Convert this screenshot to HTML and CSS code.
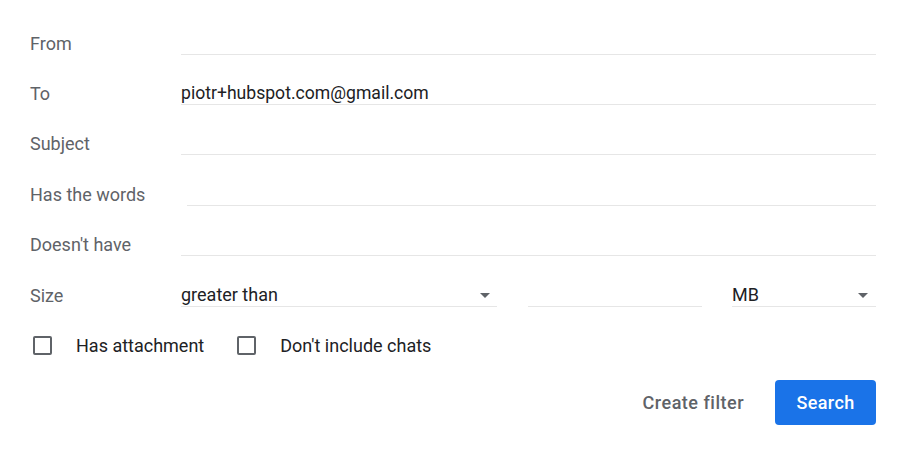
FILE: index.html
```html
<!DOCTYPE html>
<html>
<head>
<meta charset="utf-8">
<link rel="stylesheet" href="styles.css">
</head>
<body>
<form class="search-form">
  <div class="row">
    <label class="label">From</label>
    <div class="field"></div>
  </div>
  <div class="row">
    <label class="label">To</label>
    <div class="field">piotr+hubspot.com@gmail.com</div>
  </div>
  <div class="row">
    <label class="label">Subject</label>
    <div class="field"></div>
  </div>
  <div class="row">
    <label class="label">Has the words</label>
    <div class="field field-words"></div>
  </div>
  <div class="row">
    <label class="label">Doesn't have</label>
    <div class="field"></div>
  </div>
  <div class="row">
    <label class="label">Size</label>
    <div class="size-group">
      <div class="field select select-op">greater than<span class="caret"></span></div>
      <div class="field num"></div>
      <div class="field select select-unit">MB<span class="caret"></span></div>
    </div>
  </div>
  <div class="row checks">
    <span class="check"><span class="box"></span>Has attachment</span>
    <span class="check"><span class="box"></span>Don't include chats</span>
  </div>
  <div class="actions">
    <span class="link-btn">Create filter</span>
    <span class="primary-btn">Search</span>
  </div>
</form>
</body>
</html>
```

FILE: styles.css
```css
html, body {
  margin: 0;
  padding: 0;
  background: #ffffff;
}
body {
  font-family: Roboto, "Noto Sans", Arial, sans-serif;
  color: #202124;
}
.search-form {
  padding: 18px 30px 0 30px;
  width: 846px;
}
.row {
  height: 50.4px;
  display: grid;
  grid-template-columns: 151px 1fr;
  align-items: center;
}
.label {
  font-size: 18px;
  color: #5f6368;
}
.field {
  height: 22px;
  line-height: 22px;
  font-size: 17.6px;
  color: #202124;
  border-bottom: 1px solid #e6e6e6;
  position: relative;
}
.field-words {
  margin-left: 6px;
}
.size-group {
  display: flex;
  gap: 31px;
}
.select { font-size: 18px; }
.select-op { width: 316px; }
.num { width: 174px; margin-right: -1px; }
.select-unit { width: 144px; }
.caret {
  position: absolute;
  right: 7px;
  top: 9px;
  width: 0;
  height: 0;
  border-left: 5px solid transparent;
  border-right: 5px solid transparent;
  border-top: 5px solid #5f6368;
}
.select-unit .caret { right: 8px; }
.checks {
  display: flex;
  align-items: center;
}
.check {
  display: inline-flex;
  align-items: center;
  font-size: 18px;
  color: #202124;
  margin-right: 30px;
}
.box {
  box-sizing: border-box;
  width: 19px;
  height: 19px;
  border: 2px solid #5f6368;
  border-radius: 2px;
  margin-left: 3px;
  margin-right: 24px;
}
.actions {
  display: flex;
  justify-content: flex-end;
  align-items: center;
  margin-top: 9.5px;
}
.link-btn {
  font-size: 18px;
  font-weight: 500;
  color: #5f6368;
  margin-right: 31px;
  letter-spacing: 0.5px;
}
.primary-btn {
  width: 101px;
  height: 45px;
  box-sizing: border-box;
  display: flex;
  align-items: center;
  justify-content: center;
  background: #1a73e8;
  color: #ffffff;
  border-radius: 4px;
  font-size: 18px;
  font-weight: 500;
  letter-spacing: 0.4px;
}
```
